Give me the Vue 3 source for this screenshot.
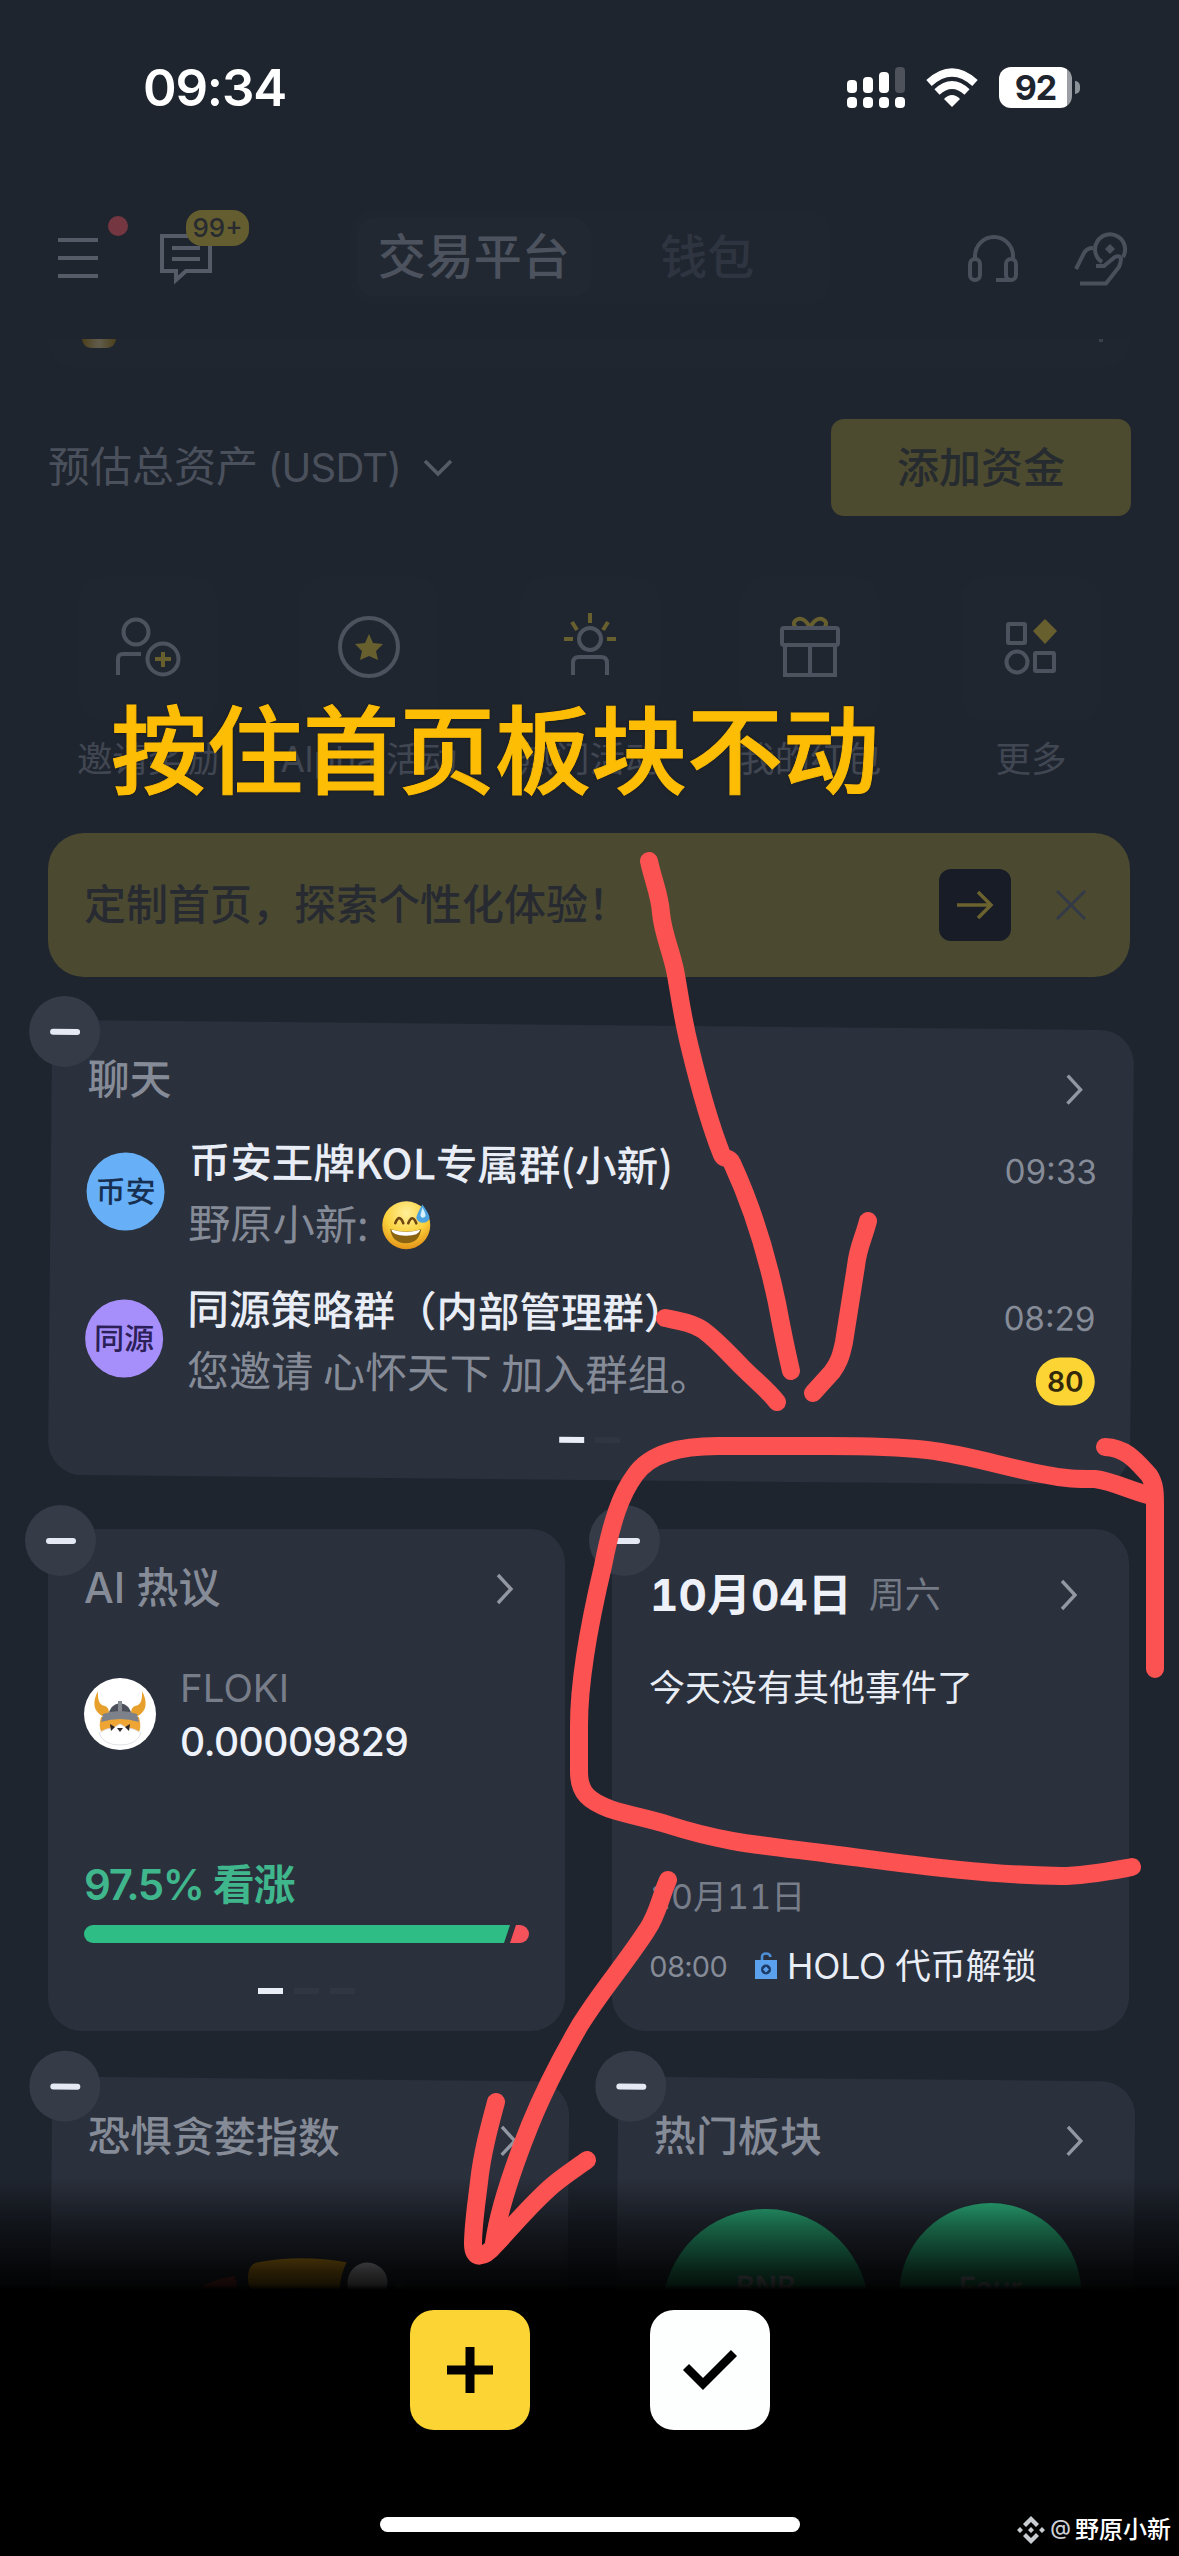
<script setup>
const shortcuts = [
  { label: '邀请奖励', icon: 'invite' },
  { label: 'Alpha 活动', icon: 'star' },
  { label: '热门活动', icon: 'event' },
  { label: '我的红包', icon: 'gift' },
  { label: '更多', icon: 'more' }
]

const chats = [
  { name: '币安王牌KOL专属群(小新)', tag: '币安', color: '#67b0f8', ink: '#173052', text: '野原小新: ', emoji: true, time: '09:33' },
  { name: '同源策略群（内部管理群）', tag: '同源', color: '#a78ffb', ink: '#2b2058', text: '您邀请 心怀天下 加入群组。', time: '08:29', unread: 80 }
]

const bullish = 97.5
</script>

<template>
  <main class="page">
    <header class="status">
      <span class="clock">09:34</span>
      <div class="status-icons">
        <svg width="58" height="42" viewBox="0 0 58 42" fill="#fff">
          <rect x="0" y="13" width="10" height="13" rx="4" /><rect x="16" y="10" width="10" height="16" rx="4" />
          <rect x="32" y="5" width="10" height="21" rx="4" /><rect x="48" y="0" width="10" height="26" rx="4" fill="#4d525b" />
          <rect x="0" y="30" width="10" height="11" rx="4" /><rect x="16" y="30" width="10" height="11" rx="4" />
          <rect x="32" y="30" width="10" height="11" rx="4" /><rect x="48" y="30" width="10" height="11" rx="4" />
        </svg>
        <svg class="wifi" width="52" height="38" viewBox="0 0 52 38" fill="none" stroke="#fff">
          <path d="M3 14Q26 -7 49 14" stroke-width="8" />
          <path d="M11 23Q26 9 41 23" stroke-width="7.5" />
          <path d="M18 30Q26 22 34 30L26 38Z" fill="#fff" stroke="none" />
        </svg>
        <div class="battery"><span>92</span><i></i></div>
      </div>
    </header>

    <nav class="topbar">
      <div class="top-left">
        <svg width="72" height="60" viewBox="0 0 72 60">
          <path d="M0 23h40M0 41h40M0 59h40" stroke="#565c67" stroke-width="4" />
          <circle cx="60" cy="9" r="10" fill="#743741" />
        </svg>
        <div class="message">
          <svg width="52" height="50" viewBox="0 0 52 50" fill="none" stroke="#565c67" stroke-width="4">
            <path d="M2 3h48v35H26l-10 9v-9H2z" /><path d="M12 15h28M12 26h28" />
          </svg>
          <span class="count">99+</span>
        </div>
      </div>
      <div class="tabs"><span class="tab active">交易平台</span><span class="tab">钱包</span></div>
      <div class="top-right">
        <svg class="headset" width="52" height="48" viewBox="0 0 52 48" fill="none" stroke="#4a505b" stroke-width="4">
          <path d="M7 24V20a19 19 0 0 1 38 0v4" />
          <rect x="2" y="23" width="10" height="21" rx="5" /><rect x="38" y="23" width="10" height="21" rx="5" />
          <path d="M28 44h16" />
        </svg>
        <svg class="hand" width="54" height="54" viewBox="0 0 54 54" fill="none" stroke="#4a505b" stroke-width="4">
          <path d="M29 30A15 15 0 1 1 50 25" /><path d="M3 37L11 21Q14 16 20 16M23 34h8L42 25q4-2 6 1 0 5-2 9L33 51.500H7" />
          <path d="M37 12l5 5-5 5-5-5z" fill="#4a505b" stroke="none" />
        </svg>
      </div>
    </nav>

    <div class="cut-strip"><i class="coin"></i><i class="speck"></i></div>

    <section class="assets">
      <div class="estimate"><span>预估总资产 <em>(USDT)</em></span>
        <svg width="30" height="18" viewBox="0 0 30 18" fill="none" stroke="#565c67" stroke-width="3.6"><path d="M2 2l13 13L28 2" /></svg>
      </div>
      <button class="deposit">添加资金</button>
    </section>

    <section class="shortcuts">
      <div v-for="s in shortcuts" :key="s.label" class="shortcut">
        <div class="tile">
          <svg width="70" height="70" viewBox="0 0 70 70" fill="none" stroke="#4d535e" stroke-width="4">
            <template v-if="s.icon === 'invite'">
              <circle cx="23" cy="19" r="12.5" /><path d="M5 62V46q0-5 5-5h18" /><circle cx="50" cy="46" r="15.5" />
              <path d="M50 39v15M42 46h16" stroke="#685f2e" />
            </template>
            <template v-else-if="s.icon === 'star'">
              <circle cx="35" cy="34" r="29" />
              <path d="M35 21l4 9 10 1-7 7 2 9-9-4-9 4 2-9-7-7 10-1z" fill="#685f2e" stroke="none" />
            </template>
            <template v-else-if="s.icon === 'event'">
              <circle cx="35" cy="26" r="11" /><path d="M18 62V50q0-6 6-6h22q6 0 6 6v12" />
              <path d="M35 0v10M17 9l5 8M53 9l-5 8M9 26h9M52 26h9" stroke="#685f2e" />
            </template>
            <template v-else-if="s.icon === 'gift'">
              <path d="M35 15q-5-11-12-9-7 3-2 9M35 15q5-11 12-9 7 3 2 9" stroke="#685f2e" />
              <rect x="7" y="15" width="56" height="17" rx="2" /><path d="M10 32v30h50V32M35 32v30" />
            </template>
            <template v-else>
              <rect x="12" y="11" width="17" height="19" rx="1" /><path d="M49 6l12 12-12 13-12-13z" fill="#685f2e" stroke="none" />
              <circle cx="21" cy="49" r="10.5" /><rect x="39" y="40" width="19" height="18" rx="1" />
            </template>
          </svg>
        </div>
        <span>{{ s.label }}</span>
      </div>
      <h1 class="callout">按住首页板块不动</h1>
    </section>

    <section class="banner">
      <span>定制首页，探索个性化体验！</span>
      <div class="go">
        <svg width="38" height="32" viewBox="0 0 38 32" fill="none" stroke="#6b622f" stroke-width="3.5"><path d="M1 16h33M22 3l13 13-13 13" /></svg>
      </div>
      <svg width="32" height="32" viewBox="0 0 32 32" stroke="#343947" stroke-width="3"><path d="M2 2l28 28M30 2L2 30" /></svg>
    </section>

    <section class="card chat tilt">
      <i class="remove"></i>
      <div class="card-head"><span>聊天</span><svg class="chev" viewBox="0 0 18 32"><path d="M2 2l13 14L2 30" /></svg></div>
      <div v-for="c in chats" :key="c.tag" class="chat-row">
        <div class="avatar" :style="{ background: c.color, color: c.ink }"><span>{{ c.tag }}</span></div>
        <div class="chat-body">
          <div class="chat-name">{{ c.name }}</div>
          <div class="chat-text"><span>{{ c.text }}</span>
            <svg v-if="c.emoji" class="emoji" width="50" height="50" viewBox="0 0 50 50">
              <defs><radialGradient id="face" cx=".5" cy=".25" r=".8"><stop offset="0" stop-color="#fff099" /><stop offset=".55" stop-color="#fbd13c" /><stop offset="1" stop-color="#e08a12" /></radialGradient></defs>
              <circle cx="25" cy="25" r="24" fill="url(#face)" />
              <path d="M14 23q4-10 8 0M27 23q4-10 8 0" fill="none" stroke="#6d4512" stroke-width="2.6" stroke-linecap="round" />
              <path d="M9 29q16 5 31 0-2 14-15.500 14T9 29z" fill="#8a6410" /><path d="M10 29.500q15 4.500 29 0-1 6-14.500 6T10 29.500z" fill="#fff" />
              <path d="M41 4q8 11 7 14a7 7 0 0 1-13 0q0-4 6-14z" fill="#4ba3df" /><path d="M41 7q4 7 3 9-4 3-5-1z" fill="#d8f1ff" />
            </svg>
          </div>
        </div>
        <div class="chat-meta"><time>{{ c.time }}</time><b v-if="c.unread">{{ c.unread }}</b></div>
      </div>
      <div class="pager"><i class="on"></i><i></i></div>
    </section>

    <div class="grid">
      <section class="card">
        <i class="remove"></i>
        <div class="card-head"><span>AI 热议</span><svg class="chev" viewBox="0 0 18 32"><path d="M2 2l13 14L2 30" /></svg></div>
        <div class="coin-row">
          <svg width="72" height="72" viewBox="0 0 72 72">
            <circle cx="36" cy="36" r="36" fill="#fff" />
            <path d="M14 13q-9 17 4 25l7-2q0-7-4-8-8-1-7-15zM58 13q9 17-4 25l-7-2q0-7 4-8 8-1 7-15z" fill="#e8a02c" />
            <path d="M17 39h38q3 12-1 16-18 13-36 0-4-6-1-16z" fill="#efa534" />
            <path d="M15 55q7-5 14-5l7-4 7 4q7 0 14 5-4 12-21 12T15 55z" fill="#fff" stroke="#d8dae0" stroke-width=".8" />
            <path d="M25 37q0-10 11-12 11 2 11 12z" fill="#4b505a" /><path d="M34 23h4v14h-4z" fill="#858990" />
            <path d="M19 36q17-6 34 0l2 8q-19-6-38 0z" fill="#7d8189" />
            <path d="M26 46l5 3-4 4zM46 46l-5 3 4 4zM33 50h6l-3 4z" fill="#2e2829" />
          </svg>
          <div class="coin-info"><span>FLOKI</span><b>0.00009829</b></div>
        </div>
        <div class="sentiment">{{ bullish }}% 看涨</div>
        <div class="meter"><i class="up"></i><i class="down"></i></div>
        <div class="pager three"><i class="on"></i><i></i><i></i></div>
      </section>

      <section class="card calendar">
        <i class="remove"></i>
        <div class="card-head date"><b>10月04日</b><small>周六</small><svg class="chev" viewBox="0 0 18 32"><path d="M2 2l13 14L2 30" /></svg></div>
        <p class="no-event">今天没有其他事件了</p>
        <div class="next-date">10月11日</div>
        <div class="event">
          <time>08:00</time>
          <svg width="22" height="28" viewBox="0 0 22 28"><path d="M7 9V5q0-3.500 4-3.500T15.500 5" fill="none" stroke="#4d8fd6" stroke-width="2.600" /><rect x="0" y="8" width="22" height="19" fill="#5aa2ee" /><circle cx="11" cy="17.500" r="5" fill="#1c3c66" /><path d="M11 14.500l3 3-3 3-3-3z" fill="#5aa2ee" /></svg>
          <span>HOLO 代币解锁</span>
        </div>
      </section>

      <section class="card tilt">
        <i class="remove"></i>
        <div class="card-head"><span>恐惧贪婪指数</span><svg class="chev" viewBox="0 0 18 32"><path d="M2 2l13 14L2 30" /></svg></div>
        <svg class="gauge" width="240" height="60" viewBox="0 0 240 60">
          <path d="M20 46q14-12 38-15 4 8 2 18-20 4-28 11H8z" fill="#b8423f" />
          <path d="M80 17q44-9 90-1-6 12-7 29-42-6-82 2-12-4-9-20 1-8 8-10z" fill="#e8a81a" />
          <circle cx="191" cy="36" r="20" fill="#e6e7ee" /><path d="M220 36l24 18h-20z" fill="#59606d" />
        </svg>
      </section>

      <section class="card tilt sectors">
        <i class="remove"></i>
        <div class="card-head"><span>热门板块</span><svg class="chev" viewBox="0 0 18 32"><path d="M2 2l13 14L2 30" /></svg></div>
        <div class="bubbles"><div class="bubble big">BNB</div><div class="bubble">Four</div></div>
      </section>
    </div>

    <footer class="dock">
      <div class="fade"></div>
      <div class="dock-body">
        <div class="actions">
          <button class="add"><svg width="46" height="46" viewBox="0 0 46 46" stroke="#000" stroke-width="9"><path d="M23 0v46M0 23h46" /></svg></button>
          <button class="done"><svg width="56" height="44" viewBox="0 0 56 44" fill="none" stroke="#000" stroke-width="8.500"><path d="M4 19l17 17L52 5" /></svg></button>
        </div>
        <div class="home-bar"></div>
        <div class="watermark">
          <svg width="28" height="28" viewBox="0 0 28 28" fill="#c9cdd2"><path d="M14 0l8 8-3 3-5-5-5 5-3-3zM14 28l8-8-3-3-5 5-5-5-3 3zM14 11l3 3-3 3-3-3zM3 11l3 3-3 3-3-3zM25 11l3 3-3 3-3-3z" /></svg>
          <span class="at">@</span><span>野原小新</span>
        </div>
      </div>
    </footer>

    <svg class="marks" width="1179" height="2556" viewBox="0 0 1179 2556">
      <path d="M649 861C653 880 660 895 661 913C663 935 672 952 676 975C682 1010 683 1020 690 1048C699 1085 708 1120 722 1155C724 1160 729 1156 732 1163C756 1215 768 1260 777 1303C782 1330 785 1345 791 1371" />
      <path d="M868 1221C863 1240 858 1247 856 1266L844 1342C841 1357 838 1364 832 1372L813 1393" />
      <path d="M665 1318C680 1321 693 1323 703 1330C718 1341 728 1353 742 1367C757 1382 767 1389 777 1402" />
      <path d="M1148 1495C1129 1490 1112 1481 1095 1479C1078 1479 1065 1479 1047 1475C1007 1468 970 1455 927 1450C890 1446 860 1446 828 1446H718C680 1446 650 1453 635 1475C621 1494 612 1520 603 1566C589 1625 579 1680 579 1725V1772C579 1793 589 1801 610 1809C628 1815 650 1819 669 1825C725 1843 760 1845 830 1854C900 1863 980 1875 1061 1876C1085 1876 1110 1871 1132 1867" />
      <path d="M1105 1447C1127 1448 1137 1462 1149 1475C1155 1484 1155 1493 1155 1505V1669" />
      <path d="M668 1880C660 1898 658 1914 647 1930C625 1964 601 1991 580 2025C562 2056 545 2088 530 2125C510 2175 498 2214 494 2243" />
      <path d="M496 2102C489 2128 482 2154 479 2182C476 2207 473 2226 473 2244C473 2260 484 2259 496 2244C514 2225 530 2205 553 2185C565 2175 576 2168 587 2160" />
    </svg>
  </main>
</template>

<style>
body { background: #000; }
</style>

<style scoped>
* { box-sizing: border-box; }
i, time, em { font-style: normal; }
b, small, h1, p, button { margin: 0; padding: 0; border: 0; font: inherit; }
svg { display: block; flex: none; overflow: visible; }
.page { position: relative; width: 1179px; height: 2556px; overflow: hidden; background: #1f252f; color: #e9edf5; font-family: Inter, "Noto Sans CJK SC", sans-serif; white-space: nowrap; }

.status { display: flex; justify-content: space-between; align-items: center; height: 175px; padding: 0 99px 0 143px; }
.clock { font-size: 51px; font-weight: 600; letter-spacing: -1.2px; line-height: 60px; color: #fff; }
.status-icons { display: flex; align-items: center; gap: 21px; }
.battery { position: relative; display: flex; align-items: center; justify-content: center; width: 73px; height: 41px; margin-right: 8px; border-radius: 12px; background: linear-gradient(90deg, #fff 68px, #9b9ea4 68px); color: #1f252f; font-size: 34px; font-weight: 700; letter-spacing: -1px; }
.battery i { position: absolute; right: -8px; top: 14px; width: 5px; height: 13px; border-radius: 0 6px 6px 0; background: #8c9097; }

.topbar { display: flex; align-items: flex-start; height: 164px; padding: 35px 52px 0 58px; }
.top-left { display: flex; gap: 30px; width: 293px; padding-top: 7px; }
.message { position: relative; width: 52px; padding-top: 16px; }
.count { position: absolute; left: 26px; top: -7px; width: 63px; height: 36px; border-radius: 16px; background: #645d30; color: #282b2f; font-size: 26px; font-weight: 500; line-height: 36px; text-align: center; }
.tabs { display: flex; width: 479px; height: 94px; padding: 8px 6px; border-radius: 22px; background: #202630; }
.tab { width: 235px; height: 78px; border-radius: 18px; color: #2f3540; font-size: 47px; line-height: 78px; text-align: center; font-weight: 500; }
.tab.active { background: #222832; color: #4d535e; font-size: 48px; }
.top-right { display: flex; gap: 53px; width: 239px; margin-left: auto; padding-top: 23px; justify-content: flex-end; }
.headset { margin-top: 3px; }
.hand { margin-top: -1px; }

.cut-strip { display: flex; justify-content: space-between; height: 29px; margin: 0 48px; padding: 0 28px 0 34px; border-radius: 0 0 28px 28px; background: #202630; }
.coin { width: 34px; height: 9px; border-radius: 0 0 17px 17px; background: linear-gradient(90deg, #4c3f1a, #615c4c 50%, #4c3f1a); }
.speck { width: 4px; height: 3px; background: #3a404a; }

.assets { display: flex; justify-content: space-between; align-items: center; height: 97px; margin: 51px 48px 0; }
.estimate { display: flex; align-items: center; gap: 22px; color: #4b515c; font-size: 42px; }
.estimate span { padding-bottom: 8px; }
.estimate em { margin-left: -2px; font-size: 40px; letter-spacing: -0.8px; }
.deposit { width: 300px; height: 97px; border-radius: 13px; background: #4c4a2f; color: #262b30; font-size: 42px; font-weight: 500; line-height: 91px; }

.shortcuts { position: relative; display: flex; justify-content: space-between; height: 256px; margin: 61px 38px 0; }
.shortcut { display: flex; flex-direction: column; align-items: center; width: 220px; color: #414752; font-size: 35.5px; line-height: 44px; gap: 17px; }
.tile { display: flex; justify-content: center; width: 140px; height: 144px; padding-top: 36px; border-radius: 24px; background: #202630; }
.callout { position: absolute; left: 73px; top: 114px; color: #febd05; font-size: 96px; font-weight: 500; line-height: 120px; text-shadow: 0 0 3px #15130a; -webkit-text-stroke: 1px #febd05; }

.banner { display: flex; align-items: center; height: 144px; margin: 0 49px 0 48px; padding: 0 43px 0 36px; border-radius: 36px; background: #4b4a31; color: #272b31; font-size: 42px; font-weight: 500; }
.banner > span { flex: 1; padding-bottom: 7px; }
.go { display: flex; align-items: center; justify-content: center; width: 72px; height: 72px; margin-right: 44px; border-radius: 12px; background: #171c26; }

.card { position: relative; width: 517px; height: 502px; padding: 0 37px 0 36px; border-radius: 34px; background: #2a303c; }
.tilt { transform: rotate(0.55deg); }
.remove { position: absolute; left: -23px; top: -24px; display: flex; align-items: center; justify-content: center; width: 71px; height: 71px; border-radius: 50%; background: #353b47; }
.remove::before { content: ""; width: 30px; height: 6px; border-radius: 3px; background: #e4e9f4; }
.grid .tilt .remove { top: -26px; }
.card-head { display: flex; align-items: center; justify-content: space-between; height: 120px; padding-right: 14px; color: #858b97; font-size: 42px; font-weight: 500; }
.card-head span { padding-bottom: 9px; }
.chev { width: 18px; height: 32px; fill: none; stroke: #9297a2; stroke-width: 3.4; }

.chat { width: 1082px; height: 455px; margin: 48px 0 0 50px; padding-right: 36px; }
.chat-row { display: flex; height: 147px; }
.avatar { display: flex; align-items: center; justify-content: center; width: 78px; height: 78px; margin-top: 12px; border-radius: 50%; font-size: 30px; font-weight: 500; }
.avatar span { padding-bottom: 4px; }
.chat-body { flex: 1; margin-left: 24px; font-family: "Noto Sans CJK SC", sans-serif; }
.chat-name { height: 60px; margin-top: -12px; font-size: 41.5px; font-weight: 500; line-height: 60px; }
.chat-text { display: flex; align-items: center; gap: 13px; height: 62px; margin-top: 3px; color: #858b97; font-size: 42.2px; line-height: 56px; }
.chat-text span { padding-bottom: 4px; }
.chat-meta { display: flex; flex-direction: column; align-items: flex-end; color: #858b97; font-size: 33.2px; }
.chat-meta time { line-height: 44px; }
.chat-meta b { width: 59px; height: 48px; margin-top: 17px; border-radius: 24px; background: #fcd535; color: #33290b; font-size: 28px; font-weight: 600; line-height: 48px; text-align: center; }
.pager { display: flex; justify-content: center; gap: 11px; }
.pager i { width: 25px; height: 6px; background: #303642; }
.pager .on { background: #e9edf5; }
.chat .pager { margin-top: -2px; }

.grid { display: grid; grid-template-columns: 517px 517px; gap: 48px 47px; margin: 49px 0 0 48px; }
.grid .tilt { left: 2px; }
.grid .sectors { left: 4px; }
.coin-row { display: flex; gap: 24px; height: 76px; margin-top: 29px; }
.coin-info { display: flex; flex-direction: column; margin-top: -17px; font-size: 38.5px; line-height: 54px; color: #777d89; }
.coin-info b { color: #eef2fa; font-weight: 500; font-size: 39px; letter-spacing: -0.5px; }
.sentiment { height: 50px; margin-top: 106px; color: #3fb68c; font-size: 42px; font-weight: 600; line-height: 50px; letter-spacing: -1.4px; }
.meter { display: flex; height: 18px; width: 445px; margin-top: 15px; border-radius: 9px; overflow: hidden; }
.up { width: 426px; background: #2ebd85; clip-path: polygon(0 0, 100% 0, 420px 100%, 0 100%); }
.down { width: 19px; background: #f6525c; clip-path: polygon(6px 0, 100% 0, 100% 100%, 0 100%); }
.pager.three { margin-top: 45px; }
.calendar { padding-left: 37px; font-variant-numeric: tabular-nums; }
.card-head.date { height: 132px; justify-content: flex-start; }
.date b { padding-bottom: 6px; margin-left: 1px; color: #eef1f8; font-size: 44px; font-weight: 700; }
.date small { margin-left: 17px; padding-bottom: 6px; color: #747a86; font-size: 36px; font-weight: 400; }
.date .chev { margin-left: auto; }
.no-event { height: 56px; font-size: 36px; line-height: 56px; margin-top: -1px; }
.next-date { height: 50px; margin-top: 156px; color: #777d89; font-size: 34px; line-height: 50px; }
.event { display: flex; align-items: center; height: 56px; margin-top: 16px; font-size: 35.5px; }
.event time { width: 106px; color: #858b97; font-size: 29px; letter-spacing: -1px; }
.event span { margin-left: 10px; padding-bottom: 5px; letter-spacing: -0.2px; }
.gauge { margin: 47px 0 0 90px; }
.bubbles { display: flex; align-items: flex-start; gap: 30px; margin: 3px 0 0 10px; }
.bubble { flex: none; width: 182px; height: 182px; border-radius: 50%; background: #2ebd85; color: #c6d2d8; font-size: 29px; font-weight: 600; line-height: 170px; text-align: center; }
.bubble.big { width: 207px; height: 207px; margin-top: 8px; line-height: 156px; }

.dock { position: absolute; left: 0; right: 0; top: 2178px; height: 378px; }
.fade { height: 112px; background: linear-gradient(rgba(0, 0, 0, 0), rgba(0, 0, 0, 0.48) 42%, rgba(0, 0, 0, 0.82) 82%, rgba(0, 0, 0, 0.9) 95%, #000); }
.dock-body { position: relative; height: 266px; padding-top: 20px; background: #000; }
.actions { display: flex; justify-content: center; gap: 120px; }
.actions button { display: flex; align-items: center; justify-content: center; width: 120px; height: 120px; border-radius: 24px; }
.add { background: #fcd535; }
.done { background: #fdfefe; }
.home-bar { width: 420px; height: 15px; margin: 87px auto 0; border-radius: 8px; background: #fff; }
.watermark { position: absolute; right: 8px; bottom: 8px; display: flex; align-items: center; height: 36px; font-size: 24px; font-weight: 500; color: #fff; }
.watermark span { padding-bottom: 5px; }
.watermark .at { margin: 0 4px 0 5px; font-size: 21px; color: #ccd0d6; }
.marks { position: absolute; left: 0; top: 0; fill: none; stroke: #fc5251; stroke-width: 18; stroke-linecap: round; stroke-linejoin: round; }
</style>
